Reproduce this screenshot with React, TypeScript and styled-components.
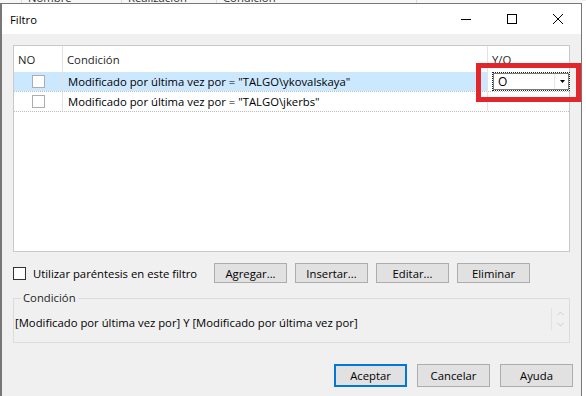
import React from 'react'
import styled, { createGlobalStyle } from 'styled-components'
import { ChevronUp, ChevronDown } from 'lucide-react'

const GlobalStyle = createGlobalStyle`
  html, body {
    margin: 0;
    padding: 0;
  }
  body {
    width: 586px;
    height: 396px;
    overflow: hidden;
    background: #fff;
    font-family: "Segoe UI", "Open Sans", "Noto Sans", sans-serif;
    font-size: 11.3px;
    color: #000;
  }
`

const Desktop = styled.div`
  position: relative;
  width: 586px;
  height: 396px;
  overflow: hidden;
  background: #fff;
`

// the app behind the dialog, only a sliver of its column header shows
const BackHeader = styled.div`
  position: absolute;
  top: 0;
  left: 0;
  right: 0;
  height: 4px;
  overflow: hidden;
  display: flex;
  background: #f7f7f7;
`

const BackHeaderCell = styled.div<{ $w: number }>`
  flex: 0 0 ${({ $w }) => $w}px;
  height: 20px;
  margin-top: -12px;
  padding-left: 6px;
  line-height: 20px;
  border-right: 1px solid #d9d9d9;
  color: #333;
  box-sizing: border-box;
`

const BackSide = styled.div`
  position: absolute;
  top: 0;
  right: 0;
  width: 4px;
  bottom: 0;
  background: #fff;
  border-top: 1px solid #eee;
`

const Window = styled.div`
  position: absolute;
  top: 3px;
  left: 0;
  width: 582px;
  height: 400px;
  box-sizing: border-box;
  background: #f0f0f0;
  border: 1px solid #777;
  border-left-width: 2px;
  display: flex;
  flex-direction: column;
`

const TitleBar = styled.div`
  flex: 0 0 30px;
  display: flex;
  align-items: center;
  background: #fff;
`

const Title = styled.div`
  flex: 1;
  padding-left: 8px;
`

const CaptionButton = styled.div`
  width: 46px;
  height: 30px;
  display: flex;
  align-items: center;
  justify-content: center;
`

const Body = styled.div`
  flex: 1;
  display: flex;
  flex-direction: column;
  padding: 11px 8px 0 11px;
`

const ListBox = styled.div`
  height: 207px;
  margin-right: 3px;
  box-sizing: border-box;
  background: #fff;
  border: 1px solid #c9c9c9;
`

const Row = styled.div<{ $header?: boolean }>`
  display: grid;
  grid-template-columns: 49px 425px 1fr;
  height: ${({ $header }) => ($header ? 26 : 20)}px;
  box-sizing: border-box;
  border-bottom: ${({ $header }) => ($header ? 'none' : '1px dotted #bdbdbd')};
`

const Cell = styled.div<{ $selected?: boolean; $center?: boolean; $last?: boolean }>`
  display: flex;
  align-items: center;
  justify-content: ${({ $center }) => ($center ? 'center' : 'flex-start')};
  padding-left: ${({ $center }) => ($center ? 0 : 5)}px;
  background: ${({ $selected }) => ($selected ? '#cce8ff' : 'transparent')};
  border-right: ${({ $last }) => ($last ? 'none' : '1px solid #e3e3e3')};
  white-space: nowrap;
`

const HeaderCell = styled(Cell)`
  padding-left: 4px;
  color: #1e1e1e;
`

const Check = styled.span`
  display: inline-block;
  width: 11px;
  height: 11px;
  background: #fff;
  border: 1px solid #adadad;
`

const Combo = styled.div`
  flex: 1;
  align-self: stretch;
  margin: 0 -1px;
  display: flex;
  align-items: center;
  background: #fff;
  border: 1px dotted #222;
  outline: 1px solid #7a7a7a;
  outline-offset: -2px;
`

const ComboText = styled.span`
  flex: 1;
  padding-left: 5px;
  font-size: 12px;
`

const ComboArrow = styled.span`
  width: 14px;
  align-self: stretch;
  display: flex;
  align-items: center;
  justify-content: center;
  border-left: 1px solid #e6e6e6;
`

const Options = styled.div`
  display: flex;
  align-items: center;
  margin-top: 11px;
  height: 20px;
`

const CheckLabel = styled.label`
  flex: 0 0 201px;
  display: flex;
  align-items: center;
  gap: 7px;
`

const BigCheck = styled.span`
  width: 11px;
  height: 11px;
  background: #fff;
  border: 1px solid #333;
`

const ButtonGroup = styled.div`
  display: flex;
  gap: 8px;
`

const Button = styled.button<{ $primary?: boolean; $h?: number }>`
  width: 73px;
  height: ${({ $h }) => $h ?? 20}px;
  box-sizing: border-box;
  padding: 0;
  font: inherit;
  color: #000;
  background: #e1e1e1;
  border: ${({ $primary }) => ($primary ? '2px solid #0078d7' : '1px solid #adadad')};
`

const Group = styled.fieldset`
  margin: 8px 3px 0 0;
  padding: 0 0 0 1px;
  min-width: 0;
  height: 52px;
  box-sizing: border-box;
  border: 1px solid #dcdcdc;
  display: flex;
`

const Legend = styled.legend`
  margin-left: 6px;
  padding: 0 2px;
  line-height: 14px;
  color: #1e1e1e;
`

const ConditionText = styled.div`
  flex: 1;
  padding-top: 10px;
  white-space: nowrap;
`

const ScrollBar = styled.div`
  width: 17px;
  margin-top: 3px;
  border-left: 1px solid #e2e2e2;
  display: flex;
  flex-direction: column;
  align-items: center;
  justify-content: space-around;
  color: #bdbdbd;
`

const Footer = styled.div`
  display: flex;
  justify-content: flex-end;
  gap: 10px;
  margin-top: 21px;
`

const RedMark = styled.div`
  position: absolute;
  left: 476px;
  top: 63px;
  width: 105px;
  height: 39px;
  box-sizing: border-box;
  border: 5px solid #e2262b;
`

const rows = [
  { text: 'Modificado por última vez por = "TALGO\\ykovalskaya"', selected: true },
  { text: 'Modificado por última vez por = "TALGO\\jkerbs"', selected: false },
]

export default function App() {
  return (
    <Desktop>
      <GlobalStyle />
      <BackHeader>
        <BackHeaderCell $w={22}></BackHeaderCell>
        <BackHeaderCell $w={100}>Nombre</BackHeaderCell>
        <BackHeaderCell $w={95}>Realización</BackHeaderCell>
        <BackHeaderCell $w={200}>Condición</BackHeaderCell>
      </BackHeader>
      <BackSide />
      <Window>
        <TitleBar>
          <Title>Filtro</Title>
          <CaptionButton>
            <svg width="10" height="10" viewBox="0 0 10 10">
              <path d="M0 5.5h10" stroke="#000" strokeWidth="1" />
            </svg>
          </CaptionButton>
          <CaptionButton>
            <svg width="10" height="10" viewBox="0 0 10 10">
              <rect x="0.5" y="0.5" width="9" height="9" fill="none" stroke="#000" strokeWidth="1" />
            </svg>
          </CaptionButton>
          <CaptionButton>
            <svg width="10" height="10" viewBox="0 0 10 10">
              <path d="M0 0L10 10M10 0L0 10" stroke="#000" strokeWidth="1" />
            </svg>
          </CaptionButton>
        </TitleBar>
        <Body>
          <ListBox>
            <Row $header>
              <HeaderCell>NO</HeaderCell>
              <HeaderCell>Condición</HeaderCell>
              <HeaderCell $last>Y/O</HeaderCell>
            </Row>
            {rows.map((r, i) => (
              <Row key={i}>
                <Cell $center $selected={r.selected}>
                  <Check />
                </Cell>
                <Cell $selected={r.selected}>{r.text}</Cell>
                <Cell $last>
                  {r.selected && (
                    <Combo>
                      <ComboText>O</ComboText>
                      <ComboArrow>
                        <svg width="5" height="3" viewBox="0 0 5 3">
                          <path d="M0 0h5L2.5 3z" fill="#000" />
                        </svg>
                      </ComboArrow>
                    </Combo>
                  )}
                </Cell>
              </Row>
            ))}
          </ListBox>
          <Options>
            <CheckLabel>
              <BigCheck />
              Utilizar paréntesis en este filtro
            </CheckLabel>
            <ButtonGroup>
              <Button>Agregar...</Button>
              <Button>Insertar...</Button>
              <Button>Editar...</Button>
              <Button>Eliminar</Button>
            </ButtonGroup>
          </Options>
          <Group>
            <Legend>Condición</Legend>
            <ConditionText>[Modificado por última vez por] Y [Modificado por última vez por]</ConditionText>
            <ScrollBar>
              <ChevronUp size={11} strokeWidth={1.5} />
              <ChevronDown size={11} strokeWidth={1.5} />
            </ScrollBar>
          </Group>
          <Footer>
            <Button $primary $h={23}>Aceptar</Button>
            <Button $h={23}>Cancelar</Button>
            <Button $h={23}>Ayuda</Button>
          </Footer>
        </Body>
      </Window>
      <RedMark />
    </Desktop>
  )
}
